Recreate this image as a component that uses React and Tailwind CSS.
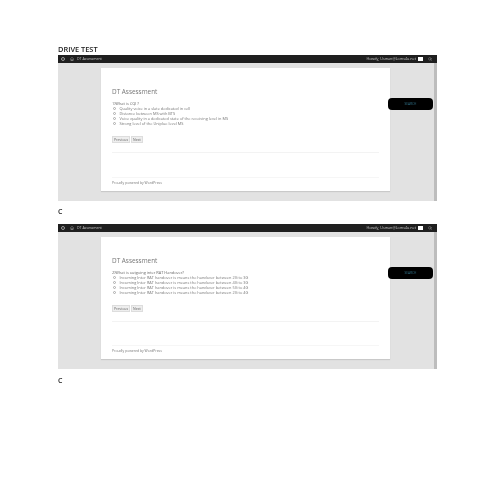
import React from "react";
import { Home, Search } from "lucide-react";

const Shot = ({ question, options, heightClass }) => {
  return (
    <div className="w-[379px] flex flex-col">
      <div className="h-[8px] bg-[#1f1f1f] flex items-center justify-between pl-[3px] pr-[5px] text-[#c8c8c8]">
        <div className="flex items-center">
          <div className="w-[4px] h-[4px] rounded-full border-[0.5px] border-[#999999]"></div>
          <Home className="w-[4px] h-[4px] ml-[5px]" strokeWidth={2} />
          <span className="text-[3.5px] leading-none ml-[3px]">DT Assessment</span>
        </div>
        <div className="flex items-center gap-[2px]">
          <span className="text-[3.7px] leading-none">Howdy, Usman@Loms4u.net</span>
          <div className="w-[5px] h-[4px] bg-white"></div>
          <Search className="w-[4px] h-[4px] ml-[3px]" strokeWidth={2} />
        </div>
      </div>
      <div className={`${heightClass} bg-[#e2e2e2] flex`}>
        <div className="w-[43px] shrink-0"></div>
        <div className="w-[289px] shrink-0 mt-[5px] mb-[10px] bg-white shadow-[0_1px_1px_#c9c9c9] pl-[11px] pr-[11px] flex flex-col">
          <h2 className="mt-[20px] text-[6.4px] leading-[8px] text-[#777777]">DT Assessment</h2>
          <p className="mt-[5px] text-[3.9px] leading-[5px] text-[#666666]">{question}</p>
          <div className="flex flex-col">
            {options.map((option) => (
              <div key={option} className="h-[5px] flex items-center gap-[3.5px] pl-[1px] text-[3.9px] text-[#777777]">
                <div className="w-[3px] h-[3px] rounded-full border-[0.5px] border-[#aaaaaa] shrink-0"></div>
                <span className="whitespace-nowrap leading-none">{option}</span>
              </div>
            ))}
          </div>
          <div className="mt-[10px] flex gap-[1px]">
            <div className="h-[7px] px-[1px] bg-[#eeeeee] border-[0.5px] border-[#dddddd] text-[3.5px] leading-[6px] text-[#666666]">Previous</div>
            <div className="h-[7px] px-[1px] bg-[#eeeeee] border-[0.5px] border-[#dddddd] text-[3.5px] leading-[6px] text-[#666666]">Next</div>
          </div>
          <div className="mt-[9px] border-t border-[#f3f3f3]"></div>
          <div className="mt-auto border-t border-[#f6f6f6] pt-[3px] pb-[6px] text-[3.4px] leading-[4px] text-[#777777]">
            Proudly powered by WordPress
          </div>
        </div>
        <div className="relative flex-1 border-r-[3px] border-[#bdbdbd]">
          <div className="absolute left-[-2px] top-[35px] w-[45px] h-[12px] bg-black rounded-[4px] flex items-center justify-center text-[3.2px] text-[#2f6f86]">
            SEARCH
          </div>
        </div>
      </div>
    </div>
  );
};

const App = () => {
  return (
    <div className="w-[495px] h-[495px] bg-white pl-[58px] pt-[44px] blur-[0.3px] font-['Open_Sans','Liberation_Sans',sans-serif]">
      <div className="h-[11px] text-[7.4px] leading-[11px] font-semibold text-[#222222]">DRIVE TEST</div>
      <Shot
        heightClass="h-[138px]"
        question="1)What is CQI ?"
        options={[
          "Quality voice in a slate dedicated in cell",
          "Distance between MS with BTS",
          "Voice quality in a dedicated state of the receiving level in MS",
          "Strong level of the Uniplue level MS",
        ]}
      />
      <div className="h-[23px] flex items-center text-[7px] font-semibold text-[#222222]">C</div>
      <Shot
        heightClass="h-[137px]"
        question="2)What is outgoing inter RAT Handover?"
        options={[
          "Incoming Inter RAT handover is means the handover between 2G to 3G",
          "Incoming Inter RAT handover is means the handover between 4G to 3G",
          "Incoming Inter RAT handover is means the handover between 5G to 4G",
          "Incoming Inter RAT handover is means the handover between 2G to 4G",
        ]}
      />
      <div className="h-[24px] flex items-center text-[7px] font-semibold text-[#222222]">C</div>
    </div>
  );
};

export default App;
